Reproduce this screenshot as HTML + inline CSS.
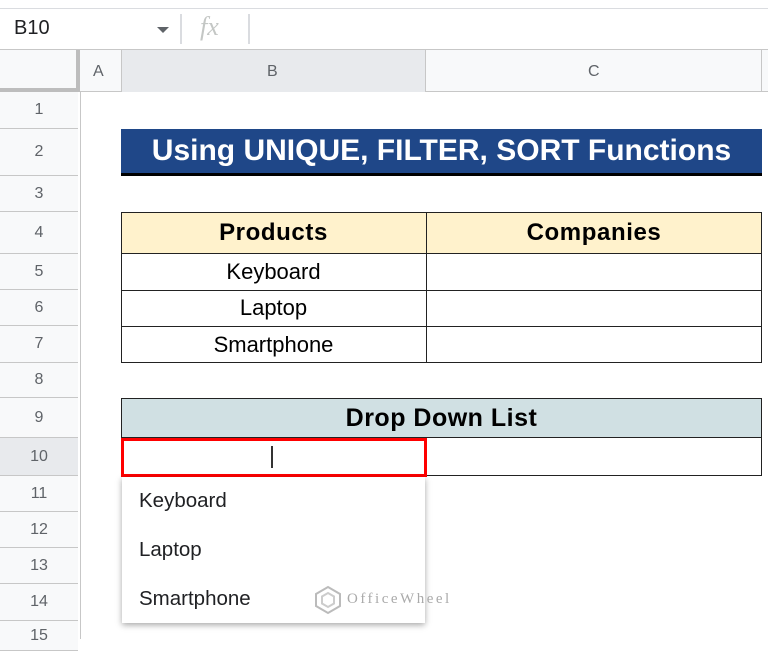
<!DOCTYPE html>
<html><head><style>
*{margin:0;padding:0;box-sizing:border-box}
body{width:768px;height:639px;overflow:hidden;background:#fff;font-family:"Liberation Sans",Arial,sans-serif;position:relative}
.a{position:absolute}
.rh{position:absolute;left:0;width:78px;background:#f8f9fa;border-bottom:1px solid #c7c7c7;color:#5f6368;font-size:16px;text-align:center;display:flex;align-items:center;justify-content:center}
.c{position:absolute;display:flex;align-items:center;justify-content:center;font-size:22px;color:#000}
</style></head><body>
<div class="a" style="left:0;top:0;width:768px;height:9px;background:#fff;border-bottom:1px solid #dadce0"></div>
<div class="a" style="left:0;top:9px;width:768px;height:41px;background:#fff;border-bottom:1px solid #c7c7c7"></div>
<div class="a" style="left:14px;top:17px;font-size:20px;color:#202124">B10</div>
<div class="a" style="left:157px;top:27px;width:0;height:0;border-left:6px solid transparent;border-right:6px solid transparent;border-top:6px solid #5f6368"></div>
<div class="a" style="left:180px;top:14px;width:2px;height:30px;background:#dadce0"></div>
<div class="a" style="left:200px;top:12px;font-size:26px;color:#c4c7c5;font-family:'Liberation Serif',serif;font-style:italic">fx</div>
<div class="a" style="left:248px;top:14px;width:2px;height:30px;background:#dadce0"></div>
<div class="a" style="left:0;top:50px;width:768px;height:42px;background:#f8f9fa;border-bottom:1px solid #c7c7c7"></div>
<div class="a" style="left:0;top:50px;width:80px;height:42px;background:#f8f9fa;border-right:4px solid #bdbdbd;border-bottom:4px solid #bdbdbd"></div>
<div class="a" style="left:121px;top:50px;width:305px;height:42px;background:#e8eaed;border-left:1px solid #c7c7c7;border-right:1px solid #c7c7c7"></div>
<div class="a" style="left:761px;top:50px;width:1px;height:42px;background:#c7c7c7"></div>
<div class="a" style="left:93px;top:63px;font-size:16px;color:#5f6368">A</div>
<div class="a" style="left:267px;top:63px;font-size:16px;color:#5f6368">B</div>
<div class="a" style="left:588px;top:63px;font-size:16px;color:#5f6368">C</div>
<div class="a" style="left:80px;top:92px;width:1px;height:547px;background:#c7c7c7"></div>
<div class="rh" style="top:92px;height:37px">1</div>
<div class="rh" style="top:129px;height:47px">2</div>
<div class="rh" style="top:176px;height:36px">3</div>
<div class="rh" style="top:212px;height:42px">4</div>
<div class="rh" style="top:254px;height:36px">5</div>
<div class="rh" style="top:290px;height:36px">6</div>
<div class="rh" style="top:326px;height:37px">7</div>
<div class="rh" style="top:363px;height:35px">8</div>
<div class="rh" style="top:398px;height:40px">9</div>
<div class="rh" style="top:438px;height:38px;background:#e8eaed">10</div>
<div class="rh" style="top:476px;height:36px">11</div>
<div class="rh" style="top:512px;height:36px">12</div>
<div class="rh" style="top:548px;height:36px">13</div>
<div class="rh" style="top:584px;height:37px">14</div>
<div class="rh" style="top:621px;height:30px">15</div>
<div class="c" style="left:121px;top:129px;width:641px;height:47px;background:#1f4788;border-bottom:3px solid #000;color:#fff;font-weight:bold;font-size:30px">Using UNIQUE, FILTER, SORT Functions</div>
<div class="a" style="left:121px;top:212px;width:641px;height:151px;border:1.5px solid #222"></div>
<div class="c" style="left:122px;top:213px;width:639px;height:41px;background:#fff2cc;border-bottom:1px solid #222"></div>
<div class="a" style="left:426px;top:212px;width:1px;height:151px;background:#222"></div>
<div class="a" style="left:121px;top:290px;width:641px;height:1px;background:#222"></div>
<div class="a" style="left:121px;top:326px;width:641px;height:1px;background:#222"></div>
<div class="c" style="left:121px;top:212px;width:305px;height:42px;font-weight:bold;font-size:24px;letter-spacing:0.6px">Products</div>
<div class="c" style="left:426px;top:212px;width:336px;height:42px;font-weight:bold;font-size:24px;letter-spacing:0.6px">Companies</div>
<div class="c" style="left:121px;top:254px;width:305px;height:36px">Keyboard</div>
<div class="c" style="left:121px;top:290px;width:305px;height:36px">Laptop</div>
<div class="c" style="left:121px;top:326px;width:305px;height:37px">Smartphone</div>
<div class="a" style="left:121px;top:398px;width:641px;height:78px;border:1.5px solid #222"></div>
<div class="c" style="left:122px;top:399px;width:639px;height:39px;background:#d0e0e3;border-bottom:1px solid #222;font-weight:bold;font-size:25px;letter-spacing:0.5px">Drop Down List</div>
<div class="a" style="left:121px;top:438px;width:306px;height:39px;border:3px solid #f00"></div>
<div class="a" style="left:271px;top:446px;width:1.5px;height:22px;background:#333"></div>
<div class="a" style="left:122px;top:477px;width:303px;height:146px;background:#fff;box-shadow:0 2px 6px rgba(0,0,0,.35)"></div>
<div class="a" style="left:139px;top:489px;font-size:20.5px;color:#202124">Keyboard</div>
<div class="a" style="left:139px;top:538px;font-size:20.5px;color:#202124">Laptop</div>
<div class="a" style="left:139px;top:587px;font-size:20.5px;color:#202124">Smartphone</div>
<svg class="a" style="left:313px;top:585px" width="30" height="30" viewBox="0 0 30 30"><path d="M15 2L27 9V21L15 28L3 21V9Z" fill="none" stroke="#bbb" stroke-width="2"/><path d="M15 8L21 11.5V18.5L15 22L9 18.5V11.5Z" fill="none" stroke="#ccc" stroke-width="2"/></svg>
<div class="a" style="left:347px;top:591px;font-size:15px;color:#aaa;letter-spacing:2.5px;font-family:'Liberation Serif',serif">OfficeWheel</div>
</body></html>
